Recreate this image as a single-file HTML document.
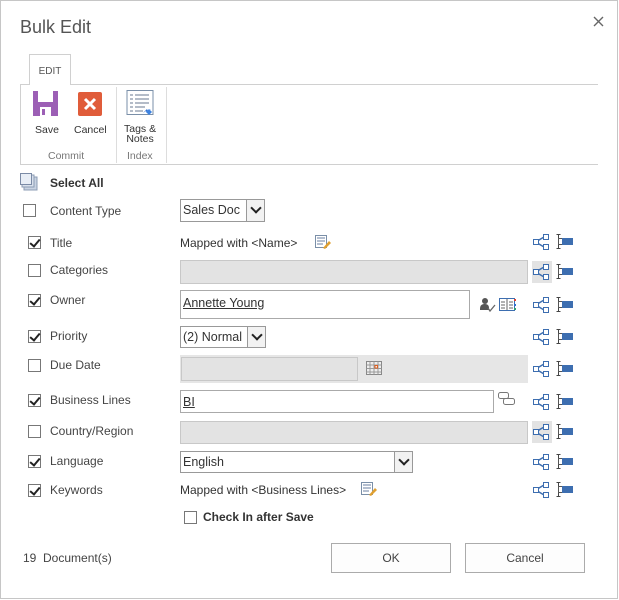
<!DOCTYPE html>
<html><head><meta charset="utf-8"><style>
*{margin:0;padding:0;box-sizing:border-box}
body{width:619px;height:600px;background:#fff;font-family:"Liberation Sans",sans-serif;color:#444;font-size:12px;position:relative;overflow:hidden}
.a{position:absolute}
.frame{left:0;top:0;width:618px;height:599px;border:1px solid #c6c6c6}
.cb{position:absolute;width:13px;height:13px;border:1px solid #777;background:#fff}
.cb.on::after{content:"";position:absolute;left:3px;top:0px;width:4px;height:8px;border:solid #222;border-width:0 2px 2px 0;transform:rotate(40deg)}
.lbl{position:absolute;left:50px;font-size:12px;color:#444}
.gray{position:absolute;background:#e3e3e3;border:1px solid #c8c8c8}
.inp{position:absolute;background:#fff;border:1px solid #aaa}
.sel{position:absolute;background:#fff;border:1px solid #999;font-size:12.5px;color:#333;padding:3px 0 0 2px}
.dd{position:absolute;right:0;top:0;bottom:0;width:18px;border-left:1px solid #999;background:#f2f2f2}
.dd::after{content:"";position:absolute;left:5px;top:4px;width:6px;height:6px;border:solid #222;border-width:0 2px 2px 0;transform:rotate(45deg)}
.btn{position:absolute;top:543px;width:120px;height:30px;border:1px solid #ababab;background:#fdfdfd;text-align:center;line-height:28px;font-size:12px;color:#444}
</style></head><body>
<div class="a frame"></div>
<div class="a" style="left:20px;top:17px;font-size:18px;color:#555">Bulk Edit</div>
<svg class="a" style="left:593px;top:16px" width="11" height="11"><path d="M1 1L10 10M10 1L1 10" stroke="#666" stroke-width="1.4"/></svg>

<div class="a" style="left:29px;top:54px;width:42px;height:31px;border:1px solid #d0d0d0;border-bottom:none;background:#fff;font-size:10px;text-align:center;line-height:33px;z-index:2;color:#555">EDIT</div>
<div class="a" style="left:20px;top:84px;width:578px;height:81px;border:1px solid #d0d0d0;border-right:none"></div>
<div class="a" style="left:116px;top:87px;width:1px;height:76px;background:#ddd"></div>
<div class="a" style="left:166px;top:87px;width:1px;height:76px;background:#ddd"></div>
<svg class="a" style="left:33px;top:91px" width="26" height="26"><rect x="0" y="0" width="25" height="25" fill="#9c5fb5"/><rect x="5" y="0" width="15" height="11" fill="#fff"/><rect x="7" y="16" width="11" height="9" fill="#fff"/><rect x="9" y="18" width="3" height="6" fill="#9c5fb5"/></svg>
<svg class="a" style="left:78px;top:92px" width="24" height="24"><rect width="24" height="24" rx="2" fill="#e05c3a"/><path d="M7 7L17 17M17 7L7 17" stroke="#fff" stroke-width="3"/></svg>
<svg class="a" style="left:126px;top:90px" width="30" height="30"><rect x="1" y="0.5" width="26" height="24" fill="#fff" stroke="#7a8fa8"/><g stroke="#6a7a90" stroke-width="1"><path d="M4 5h3M9 5h14M4 9h3M9 9h14M4 13h3M9 13h14M4 17h3M9 17h10M4 21h3M9 21h8"/></g><path d="M17 23l4-4 1 2 3-2-4 4-1-2z" fill="#2f6fd0"/><path d="M20 22l3 3 3-3-3-3z" fill="#3c82e0"/></svg>
<div class="a" style="left:35px;top:124px;font-size:10.5px;color:#333">Save</div>
<div class="a" style="left:74px;top:124px;font-size:10.5px;color:#333">Cancel</div>
<div class="a" style="left:124px;top:124px;font-size:10.5px;color:#333;line-height:10px;text-align:center">Tags &amp;<br>Notes</div>
<div class="a" style="left:48px;top:150px;font-size:10.5px;color:#777">Commit</div>
<div class="a" style="left:127px;top:150px;font-size:10.5px;color:#777">Index</div>

<svg class="a" style="left:20px;top:173px" width="18" height="18"><rect x="4" y="4" width="13" height="13" fill="#c9d3e2" stroke="#8c9cb4"/><rect x="2" y="2" width="12" height="12" fill="#d9e1ec" stroke="#8c9cb4"/><rect x="0.5" y="0.5" width="11" height="11" fill="#e8eef6" stroke="#7b8ba6"/></svg>
<div class="a" style="left:50px;top:176px;font-size:12px;font-weight:bold;color:#333">Select All</div>

<div class="cb" style="left:23px;top:204px"></div><div class="lbl" style="top:204px">Content Type</div>
<div class="sel" style="left:180px;top:199px;width:85px;height:23px">Sales Doc<div class="dd"></div></div>

<div class="cb on" style="left:28px;top:236px"></div><div class="lbl" style="top:236px">Title</div>
<div class="a" style="left:180px;top:236px;font-size:12px;color:#333">Mapped with &lt;Name&gt;</div>
<svg class="a" style="left:315px;top:235px" width="16" height="15"><rect x="0.5" y="0.5" width="11" height="12" fill="#fff" stroke="#7a8fa8"/><path d="M2 3h8M2 6h8M2 9h6" stroke="#6a7fa0"/><path d="M8 13l6-7 2 2-6 6z" fill="#e0a030"/></svg>

<div class="cb" style="left:28px;top:264px"></div><div class="lbl" style="top:263px">Categories</div>
<div class="gray" style="left:180px;top:260px;width:348px;height:24px"></div>

<div class="cb on" style="left:28px;top:294px"></div><div class="lbl" style="top:293px">Owner</div>
<div class="inp" style="left:180px;top:290px;width:290px;height:29px"><span style="position:absolute;left:2px;top:5px;font-size:12.5px;color:#333;text-decoration:underline">Annette Young</span></div>
<svg class="a" style="left:480px;top:297px" width="16" height="16"><circle cx="5" cy="4" r="3" fill="#555"/><path d="M0 12c0-4 2-5 5-5s4 2 4 4v2H0z" fill="#555"/><path d="M8 11l2 3 5-6" stroke="#666" stroke-width="1.3" fill="none"/></svg>
<svg class="a" style="left:499px;top:298px" width="18" height="14"><rect x="0.5" y="0.5" width="15" height="12" fill="#fff" stroke="#3d6eb0"/><path d="M8 1v11M2 4h4M2 7h4M2 10h4M10 4h4M10 7h4M10 10h4" stroke="#666"/><rect x="15" y="1" width="2" height="2" fill="#e04030"/><rect x="15" y="6" width="2" height="2" fill="#3070d0"/><rect x="15" y="10" width="2" height="2" fill="#30a070"/></svg>

<div class="cb on" style="left:28px;top:330px"></div><div class="lbl" style="top:329px">Priority</div>
<div class="sel" style="left:180px;top:326px;width:86px;height:22px">(2) Normal<div class="dd"></div></div>

<div class="cb" style="left:28px;top:359px"></div><div class="lbl" style="top:358px">Due Date</div>
<div class="a" style="left:180px;top:355px;width:348px;height:28px;background:#e6e6e6"></div>
<div class="gray" style="left:181px;top:357px;width:177px;height:24px"></div>
<svg class="a" style="left:366px;top:361px" width="16" height="14"><rect x="0.5" y="0.5" width="15" height="13" fill="#eee" stroke="#888"/><path d="M0.5 4h15M0.5 7.5h15M0.5 11h15M4 0.5v13M8 0.5v13M12 0.5v13" stroke="#999"/><rect x="9" y="4.5" width="2.5" height="2.5" fill="none" stroke="#e06020"/></svg>

<div class="cb on" style="left:28px;top:394px"></div><div class="lbl" style="top:393px">Business Lines</div>
<div class="inp" style="left:180px;top:390px;width:314px;height:23px"><span style="position:absolute;left:2px;top:4px;font-size:12.5px;color:#333;text-decoration:underline">BI</span></div>
<svg class="a" style="left:498px;top:392px" width="18" height="14"><rect x="0.5" y="0.5" width="10" height="6" rx="2" fill="#fff" stroke="#777"/><rect x="5.5" y="6.5" width="11" height="6" rx="2" fill="#fff" stroke="#777"/></svg>

<div class="cb" style="left:28px;top:425px"></div><div class="lbl" style="top:424px">Country/Region</div>
<div class="gray" style="left:180px;top:421px;width:348px;height:23px"></div>

<div class="cb on" style="left:28px;top:455px"></div><div class="lbl" style="top:454px">Language</div>
<div class="sel" style="left:180px;top:451px;width:233px;height:22px">English<div class="dd"></div></div>

<div class="cb on" style="left:28px;top:484px"></div><div class="lbl" style="top:483px">Keywords</div>
<div class="a" style="left:180px;top:483px;font-size:12px;color:#333">Mapped with &lt;Business Lines&gt;</div>
<svg class="a" style="left:361px;top:482px" width="16" height="15"><rect x="0.5" y="0.5" width="11" height="12" fill="#fff" stroke="#7a8fa8"/><path d="M2 3h8M2 6h8M2 9h6" stroke="#6a7fa0"/><path d="M8 13l6-7 2 2-6 6z" fill="#e0a030"/></svg>

<div class="cb" style="left:184px;top:511px"></div>
<div class="a" style="left:203px;top:510px;font-size:12px;font-weight:bold;color:#333">Check In after Save</div>

<svg class="a" style="left:530px;top:230px" width="50" height="270">
<defs>
<g id="sh"><path d="M3.5 7.5L11 3M3.5 8.5L11 13" stroke="#3d6eb0" stroke-width="1.5" fill="none"/><rect x="0.5" y="5.5" width="5" height="5" fill="#fff" stroke="#3d6eb0"/><rect x="10.5" y="0.5" width="5" height="5" fill="#fff" stroke="#3d6eb0"/><rect x="10.5" y="10.5" width="5" height="5" fill="#fff" stroke="#3d6eb0"/></g>
<g id="fl"><path d="M2.5 0.5v14M0.5 0.5h4M0.5 14.5h4" stroke="#444" fill="none"/><rect x="2.5" y="4.5" width="14" height="6" fill="#fff" stroke="#555"/><rect x="6" y="4" width="11" height="7" fill="#3d6eb0"/></g>
</defs>
<rect x="2" y="31" width="20" height="22" fill="#e3e3e3"/>
<rect x="2" y="191" width="20" height="22" fill="#e3e3e3"/>
<use href="#sh" x="3" y="4"/><use href="#fl" x="26" y="4"/>
<use href="#sh" x="3" y="34"/><use href="#fl" x="26" y="34"/>
<use href="#sh" x="3" y="67"/><use href="#fl" x="26" y="67"/>
<use href="#sh" x="3" y="99"/><use href="#fl" x="26" y="99"/>
<use href="#sh" x="3" y="131"/><use href="#fl" x="26" y="131"/>
<use href="#sh" x="3" y="164"/><use href="#fl" x="26" y="164"/>
<use href="#sh" x="3" y="194"/><use href="#fl" x="26" y="194"/>
<use href="#sh" x="3" y="224"/><use href="#fl" x="26" y="224"/>
<use href="#sh" x="3" y="252"/><use href="#fl" x="26" y="252"/>
</svg>

<div class="a" style="left:23px;top:551px;font-size:12px;color:#444">19&nbsp; Document(s)</div>
<div class="btn" style="left:331px">OK</div>
<div class="btn" style="left:465px">Cancel</div>
</body></html>
